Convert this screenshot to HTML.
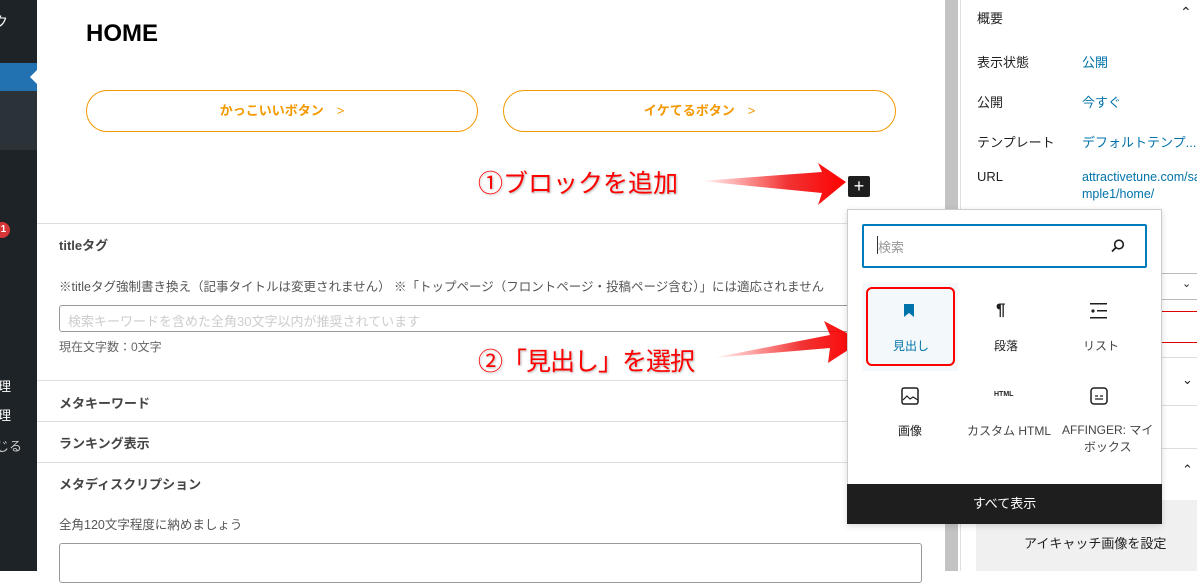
<!DOCTYPE html>
<html><head><meta charset="utf-8"><style>
*{box-sizing:border-box;margin:0;padding:0}
body{width:1197px;height:571px;overflow:hidden;position:relative;background:#fff;font-family:"Liberation Sans","Noto Sans CJK JP",sans-serif;color:#1e1e1e}
.a{position:absolute}
.t{font-size:13px;white-space:nowrap}
.hl{position:absolute;height:1px;background:#ddd}
.blue{color:#0073aa}
</style></head><body>
<div class="a" style="left:0;top:0;width:37px;height:571px;background:#1d2327"></div>
<div class="a" style="left:0;top:63px;width:37px;height:28px;background:#2271b1"></div>
<div class="a" style="left:30px;top:70px;width:0;height:0;border-top:7px solid transparent;border-bottom:7px solid transparent;border-right:7px solid #fff"></div>
<div class="a" style="left:0;top:91px;width:37px;height:59px;background:#2c3338"></div>
<div class="a t" style="left:-6px;top:12px;color:#fff;font-size:14px">ク</div>
<div class="a" style="left:-6px;top:222px;width:16px;height:16px;border-radius:50%;background:#d63638;color:#fff;font-size:10px;text-align:center;line-height:16px;font-weight:bold">&nbsp;1</div>
<div class="a t" style="left:-2px;top:376px;color:#fff">理</div>
<div class="a t" style="left:-2px;top:405px;color:#fff">理</div>
<div class="a t" style="left:-4px;top:436px;color:#ccc">じる</div>

<div class="a" style="left:86px;top:20px;font-size:24px;font-weight:bold;color:#000">HOME</div>
<div class="a" style="left:86px;top:90px;width:392px;height:42px;border:1px solid #f39800;border-radius:21px;color:#f39800;font-size:13px;font-weight:bold;text-align:center;line-height:40px">かっこいいボタン　<span style="font-weight:normal">&gt;</span></div>
<div class="a" style="left:503px;top:90px;width:393px;height:42px;border:1px solid #f39800;border-radius:21px;color:#f39800;font-size:13px;font-weight:bold;text-align:center;line-height:40px">イケてるボタン　<span style="font-weight:normal">&gt;</span></div>

<div class="hl" style="left:37px;top:223px;width:908px"></div>
<div class="a t" style="left:59px;top:235px;font-weight:bold;color:#444">titleタグ</div>
<div class="a t" style="left:59px;top:276px;color:#555;font-size:12.5px">※titleタグ強制書き換え（記事タイトルは変更されません） ※「トップページ（フロントページ・投稿ページ含む）」には適応されません</div>
<div class="a" style="left:59px;top:305px;width:870px;height:27px;border:1px solid #999;border-radius:3px"></div>
<div class="a t" style="left:68px;top:311px;color:#ccc">検索キーワードを含めた全角30文字以内が推奨されています</div>
<div class="a t" style="left:59px;top:338px;color:#666;font-size:12px">現在文字数：0文字</div>
<div class="hl" style="left:37px;top:380px;width:908px"></div>
<div class="a t" style="left:59px;top:393px;font-weight:bold;color:#444">メタキーワード</div>
<div class="hl" style="left:37px;top:421px;width:908px"></div>
<div class="a t" style="left:59px;top:433px;font-weight:bold;color:#444">ランキング表示</div>
<div class="hl" style="left:37px;top:462px;width:908px"></div>
<div class="a t" style="left:59px;top:474px;font-weight:bold;color:#444">メタディスクリプション</div>
<div class="a t" style="left:59px;top:514px;color:#555;font-size:12.5px">全角120文字程度に納めましょう</div>
<div class="a" style="left:59px;top:543px;width:863px;height:40px;border:1px solid #999;border-radius:3px"></div>

<div class="a" style="left:848px;top:176px;width:22px;height:21px;background:#1e1e1e;border-radius:2px;color:#fff;text-align:center;line-height:20px;font-size:18px">+</div>

<div class="a" style="left:478px;top:164px;font-size:25px;color:#f00;white-space:nowrap;text-shadow:1px 1px 2px rgba(0,0,0,.3)">①ブロックを追加</div>
<div class="a" style="left:478px;top:342px;font-size:25px;color:#f00;white-space:nowrap;letter-spacing:-1px;text-shadow:1px 1px 2px rgba(0,0,0,.3)">②「見出し」を選択</div>
<svg class="a" style="left:690px;top:160px" width="170" height="50"><defs><linearGradient id="g" x1="0" x2="1"><stop offset="0" stop-color="#f00" stop-opacity="0"/><stop offset=".6" stop-color="#e00" stop-opacity=".8"/><stop offset="1" stop-color="#f00"/></linearGradient></defs><polygon points="10,21 132,12 128,3 156,22 128,45 132,33" fill="url(#g)"/></svg>
<svg class="a" style="left:700px;top:315px" width="170" height="50"><polygon points="12,43 130,20 124,6 162,26 128,48 130,33" fill="url(#g)"/></svg>

<div class="a" style="left:945px;top:0;width:13px;height:571px;background:#c3c3c3"></div>
<div class="a" style="left:960px;top:0;width:1px;height:571px;background:#e0e0e0"></div>
<div class="a t" style="left:977px;top:8px">概要</div>
<div class="a t" style="left:1180px;top:4px;font-size:14px">⌃</div>
<div class="a t" style="left:977px;top:52px">表示状態</div><div class="a t blue" style="left:1082px;top:52px">公開</div>
<div class="a t" style="left:977px;top:92px">公開</div><div class="a t blue" style="left:1082px;top:92px">今すぐ</div>
<div class="a t" style="left:977px;top:132px">テンプレート</div><div class="a t blue" style="left:1082px;top:132px">デフォルトテンプ...</div>
<div class="a t" style="left:977px;top:169px">URL</div>
<div class="a t blue" style="left:1082px;top:169px;line-height:17px;font-size:12.5px">attractivetune.com/sa<br>mple1/home/</div>
<div class="hl" style="left:1160px;top:273px;width:37px;background:#bbb"></div>
<div class="hl" style="left:1160px;top:299px;width:37px;background:#bbb"></div>
<div class="hl" style="left:1160px;top:311px;width:37px;background:#d00"></div>
<div class="hl" style="left:1160px;top:342px;width:37px;background:#d00"></div>
<div class="hl" style="left:1160px;top:357px;width:37px"></div>
<div class="hl" style="left:1160px;top:405px;width:37px"></div>
<div class="hl" style="left:1160px;top:448px;width:37px"></div>
<div class="a t" style="left:1182px;top:277px;font-size:11px">⌄</div>
<div class="a t" style="left:1182px;top:372px;font-size:13px">⌄</div>
<div class="a t" style="left:1182px;top:462px;font-size:13px">⌃</div>
<div class="a" style="left:976px;top:500px;width:221px;height:71px;background:#f0f0f0"></div>
<div class="a t" style="left:1024px;top:533px">アイキャッチ画像を設定</div>

<div class="a" style="left:847px;top:209px;width:315px;height:315px;background:#fff;border:1px solid #ccc;box-shadow:0 2px 6px rgba(0,0,0,.15)"></div>
<div class="a" style="left:862px;top:224px;width:285px;height:44px;border:2px solid #007cba;border-radius:2px"></div>
<div class="a" style="left:877px;top:236px;width:1px;height:18px;background:#333"></div>
<div class="a t" style="left:878px;top:237px;color:#999">検索</div>
<svg class="a" style="left:1110px;top:238px" width="16" height="16"><circle cx="9" cy="6.5" r="4.3" fill="none" stroke="#1e1e1e" stroke-width="1.6"/><line x1="6" y1="9.5" x2="2" y2="13.5" stroke="#1e1e1e" stroke-width="1.8"/></svg>
<div class="a" style="left:862px;top:283px;width:96px;height:88px;background:#f3f8fb"></div>
<div class="a" style="left:866px;top:287px;width:89px;height:79px;border:2px solid #f00;border-radius:6px"></div>
<svg class="a" style="left:903px;top:304px" width="14" height="14"><path d="M1 0h10v13l-5-4-5 4z" fill="#0073aa"/></svg>
<div class="a t" style="left:893px;top:337px;color:#0073aa;font-size:12px">見出し</div>
<div class="a" style="left:996px;top:300px;font-size:17px;font-weight:bold">¶</div>
<div class="a t" style="left:994px;top:337px;font-size:12px">段落</div>
<svg class="a" style="left:1090px;top:302px" width="18" height="18"><circle cx="3" cy="9" r="1.6" fill="#1e1e1e"/><rect x="0" y="1" width="17" height="1.5" fill="#1e1e1e"/><rect x="7" y="8" width="10" height="1.5" fill="#1e1e1e"/><rect x="0" y="15" width="17" height="1.5" fill="#1e1e1e"/></svg>
<div class="a t" style="left:1083px;top:337px;font-size:12px;color:#444">リスト</div>
<svg class="a" style="left:901px;top:387px" width="18" height="18"><rect x="1" y="1" width="16" height="16" rx="2" fill="none" stroke="#1e1e1e" stroke-width="1.5"/><path d="M2 13l4-4 3 3 3-2 5 3" fill="none" stroke="#1e1e1e" stroke-width="1.2"/></svg>
<div class="a t" style="left:898px;top:422px;font-size:12px">画像</div>
<div class="a" style="left:994px;top:391px;font-size:7px;font-weight:bold">HTML</div>
<div class="a t" style="left:967px;top:422px;font-size:12px;color:#444">カスタム HTML</div>
<svg class="a" style="left:1090px;top:387px" width="18" height="18"><rect x="1" y="1" width="16" height="16" rx="3" fill="none" stroke="#1e1e1e" stroke-width="1.5"/><path d="M5 9h3M10 9h3M5 12h8" stroke="#1e1e1e" stroke-width="1.2"/></svg>
<div class="a t" style="left:1062px;top:422px;font-size:12px;color:#444;text-align:center;line-height:17px">AFFINGER: マイ<br>ボックス</div>
<div class="a" style="left:847px;top:484px;width:315px;height:40px;background:#1e1e1e;color:#fff;font-size:13px;text-align:center;line-height:40px">すべて表示</div>
</body></html>
